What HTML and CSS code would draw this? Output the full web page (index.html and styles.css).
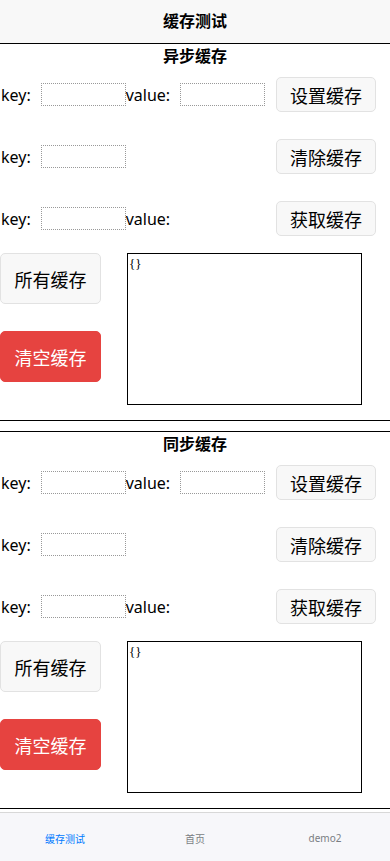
FILE: index.html
```html
<!DOCTYPE html>
<html lang="zh-CN">
<head>
    <meta charset="UTF-8">
    <meta name="viewport" content="width=device-width, initial-scale=1.0">
    <title>缓存测试</title>
    <link rel="stylesheet" href="styles.css">
</head>
<body>
    <div class="navbar">缓存测试</div>

    <!-- 异步缓存 -->
    <div class="section">
        <div class="section-title">异步缓存</div>
        <div class="row">
            <span class="label">key:</span><input class="field" type="text">
            <span class="label">value:</span><input class="field" type="text">
            <button class="btn">设置缓存</button>
        </div>
        <div class="row">
            <span class="label">key:</span><input class="field" type="text">
            <button class="btn">清除缓存</button>
        </div>
        <div class="row">
            <span class="label">key:</span><input class="field" type="text">
            <span class="label">value:</span>
            <button class="btn">获取缓存</button>
        </div>
        <div class="output-row">
            <div class="btn-col">
                <button class="btn btn-big">所有缓存</button>
                <button class="btn btn-big btn-warn">清空缓存</button>
            </div>
            <textarea class="output" readonly>{}</textarea>
        </div>
    </div>

    <!-- 同步缓存 -->
    <div class="section">
        <div class="section-title">同步缓存</div>
        <div class="row">
            <span class="label">key:</span><input class="field" type="text">
            <span class="label">value:</span><input class="field" type="text">
            <button class="btn">设置缓存</button>
        </div>
        <div class="row">
            <span class="label">key:</span><input class="field" type="text">
            <button class="btn">清除缓存</button>
        </div>
        <div class="row">
            <span class="label">key:</span><input class="field" type="text">
            <span class="label">value:</span>
            <button class="btn">获取缓存</button>
        </div>
        <div class="output-row">
            <div class="btn-col">
                <button class="btn btn-big">所有缓存</button>
                <button class="btn btn-big btn-warn">清空缓存</button>
            </div>
            <textarea class="output" readonly>{}</textarea>
        </div>
    </div>

    <!-- Tab Bar -->
    <div class="tabbar">
        <div class="tab active">缓存测试</div>
        <div class="tab">首页</div>
        <div class="tab">demo2</div>
    </div>
</body>
</html>
```

FILE: styles.css
```css
body {
    margin: 0;
    font-family: "Noto Sans", "Noto Sans CJK SC", sans-serif;
    color: #000;
    background: #fff;
}

.navbar {
    height: 43px;
    line-height: 43px;
    text-align: center;
    font-size: 16px;
    font-weight: bold;
    background-color: #f8f8f8;
}

.section {
    border-top: 1px solid #000;
    border-bottom: 1px solid #000;
    padding-bottom: 15px;
}

.section + .section {
    margin-top: 10px;
}

.section-title {
    height: 24px;
    line-height: 24px;
    text-align: center;
    font-size: 16px;
    font-weight: bold;
}

.row {
    display: flex;
    align-items: center;
    height: 35px;
    margin-top: 27px;
    padding-left: 1px;
    font-size: 16px;
}

.section-title + .row {
    margin-top: 9px;
}

.label {
    margin-right: 10px;
}

.field {
    box-sizing: border-box;
    width: 85px;
    height: 23px;
    margin: 0;
    padding: 0 4px;
    border: 1px dotted #999;
    outline: none;
}

.btn {
    box-sizing: border-box;
    margin: 0;
    padding: 0 13px;
    height: 35px;
    font-family: inherit;
    font-size: 18px;
    color: #000;
    background-color: #f8f8f8;
    border: 1px solid #e2e2e2;
    border-radius: 5px;
}

.row .btn {
    margin-left: auto;
    margin-right: 14px;
}

.output-row {
    display: flex;
    margin-top: 17px;
}

.btn-col {
    display: flex;
    flex-direction: column;
    gap: 27px;
    width: 101px;
}

.btn-big {
    width: 101px;
    height: 51px;
}

.btn-warn {
    background-color: #e64340;
    border-color: #e64340;
    color: #fff;
}

.output {
    box-sizing: border-box;
    width: 235px;
    height: 152px;
    margin: 0 0 0 26px;
    padding: 2px 1px;
    border: 1px solid #000;
    font-family: "Liberation Serif", serif;
    font-size: 13px;
    color: #000;
    background: #fff;
    resize: none;
    outline: none;
}

.tabbar {
    display: flex;
    margin-top: 3px;
    height: 50px;
    border-top: 1px solid #d8d8d8;
    background-color: #f7f7fa;
}

.tab {
    flex: 1;
    display: flex;
    align-items: center;
    justify-content: center;
    font-size: 10px;
    color: #7a7e83;
}

.tab.active {
    color: #007aff;
}
```
